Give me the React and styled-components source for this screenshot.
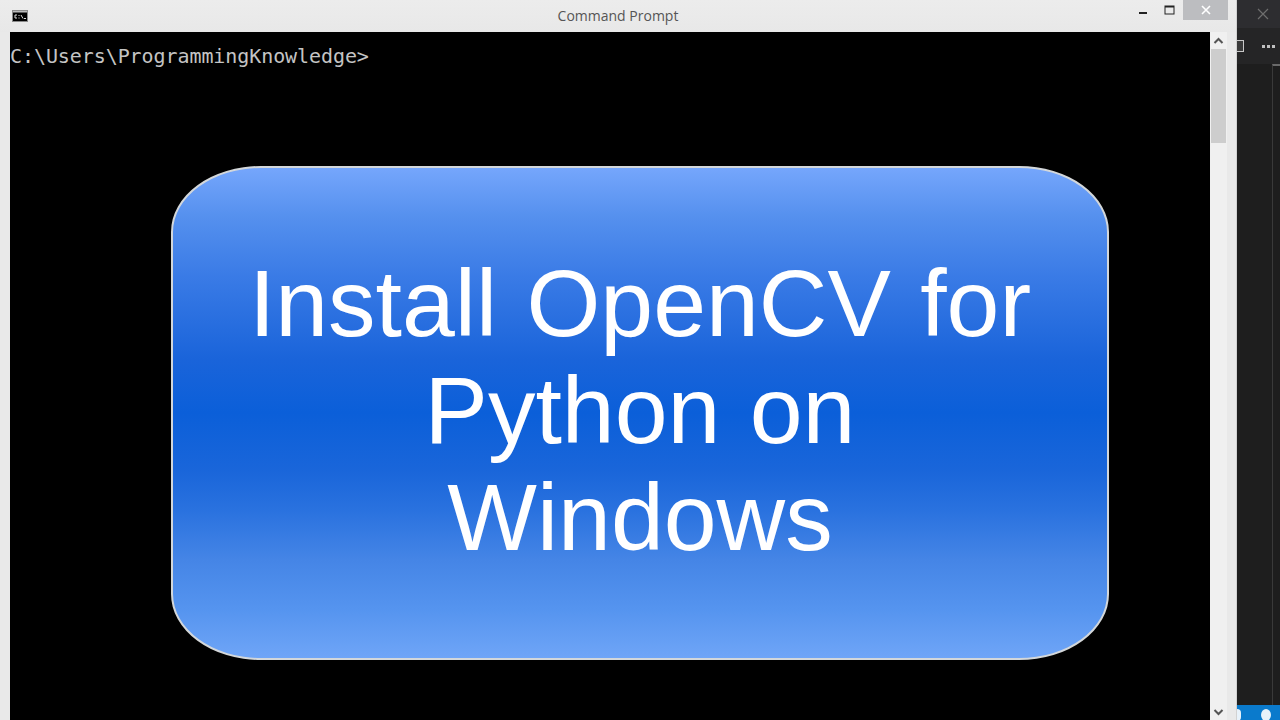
import React from "react";
import styled, { createGlobalStyle } from "styled-components";

const GlobalStyle = createGlobalStyle`
  html, body {
    margin: 0;
    padding: 0;
    width: 1280px;
    height: 720px;
    overflow: hidden;
    background: #1e1e1e;
  }
`;

const Screen = styled.div`
  display: flex;
  width: 1280px;
  height: 720px;
  overflow: hidden;
`;

const Window = styled.div`
  width: 1237px;
  display: flex;
  flex-direction: column;
  background: #e9e9e9;
  border-right: 1px solid #d2d2d2;
  box-sizing: border-box;
`;

const TitleBar = styled.div`
  height: 32px;
  flex: none;
  display: grid;
  grid-template-columns: 1fr auto 1fr;
  align-items: start;
  background: linear-gradient(#ececec, #e8e8e8);
`;

const TitleLeft = styled.div`
  padding: 10px 0 0 12px;
  display: flex;
`;

const Title = styled.div`
  font-family: "Open Sans", "Noto Sans", sans-serif;
  font-size: 14px;
  line-height: 32px;
  color: #555;
`;

const WindowButtons = styled.div`
  display: flex;
  justify-content: flex-end;
  padding-right: 8px;
`;

const WindowButton = styled.div`
  width: ${(p) => p.$w}px;
  height: 20px;
  display: flex;
  align-items: center;
  justify-content: center;
  background: ${(p) => (p.$close ? "#bcbdc0" : "transparent")};
`;

const Body = styled.div`
  flex: 1;
  display: flex;
  min-height: 0;
  padding-left: 10px;
`;

const Console = styled.div`
  width: 1200px;
  background: #000;
  display: flex;
  flex-direction: column;
  overflow: hidden;
`;

const Prompt = styled.div`
  font-family: "DejaVu Sans Mono", "Liberation Mono", monospace;
  font-size: 20px;
  letter-spacing: -0.08px;
  line-height: 24px;
  height: 24px;
  margin-top: 12px;
  color: #c4c4c4;
  white-space: pre;
`;

const Banner = styled.div`
  box-sizing: border-box;
  width: 938px;
  height: 494px;
  margin: 98px 0 0 161px;
  padding-bottom: 5px;
  flex: none;
  border: 2px solid #d3d7da;
  border-radius: 90px / 66px;
  background: linear-gradient(
    #75a6fc 0%,
    #5590ee 10%,
    #3a7be6 22%,
    #1a64da 39%,
    #0b5fd9 50%,
    #1a66da 62%,
    #2a72df 70%,
    #4585e6 80%,
    #5594ef 90%,
    #6fa5f7 100%
  );
  display: flex;
  flex-direction: column;
  align-items: center;
  justify-content: center;
`;

const BannerLine = styled.div`
  font-family: "Liberation Sans", Arial, sans-serif;
  font-size: 95px;
  word-spacing: 3px;
  line-height: 107px;
  color: #fff;
  white-space: pre;
`;

const ScrollBar = styled.div`
  width: 17px;
  flex: none;
  display: flex;
  flex-direction: column;
  align-items: center;
  background: #f0f0f0;
`;

const ScrollArrow = styled.div`
  height: 17px;
  flex: none;
  display: flex;
  align-items: center;
  justify-content: center;
`;

const ScrollThumb = styled.div`
  width: 15px;
  height: 94px;
  flex: none;
  background: #cdcdcd;
`;

const ScrollTrack = styled.div`
  flex: 1;
`;

const SidePanel = styled.div`
  flex: 1;
  display: flex;
  flex-direction: column;
  background: #1e1e1e;
`;

const SideTitle = styled.div`
  height: 28px;
  flex: none;
  background: #2d2d30;
  display: flex;
  justify-content: flex-end;
  align-items: center;
  padding-right: 11px;
`;

const SideTabs = styled.div`
  height: 36px;
  flex: none;
  background: #252526;
  display: flex;
  align-items: center;
  justify-content: space-between;
  padding-right: 5px;
`;

const SideSplit = styled.div`
  width: 7px;
  height: 12px;
  box-sizing: border-box;
  background: #3a3a3a;
  border: 1px solid #c8c8c8;
  border-left: none;
`;

const Dots = styled.div`
  display: flex;
  gap: 2px;
`;

const Dot = styled.span`
  width: 3px;
  height: 3px;
  background: #c0c0c0;
`;

const SideEditor = styled.div`
  flex: 1;
  display: flex;
  justify-content: flex-end;
`;

const MiniScroll = styled.div`
  width: 7px;
  border-left: 1px solid #3a3a3a;
  border-top: 2px solid #6a6a6a;
`;

const StatusBar = styled.div`
  height: 11px;
  flex: none;
  background: #0a7acc;
  display: flex;
  align-items: flex-start;
  overflow: hidden;
  padding-top: 4px;
  gap: 20px;
`;

const StatusIcon = styled.span`
  width: ${(p) => p.$w}px;
  height: 12px;
  flex: none;
  background: #e8f2fa;
  border-radius: ${(p) => (p.$half ? "0 6px 6px 0" : "50%")};
`;

function App() {
  return (
    <Screen>
      <GlobalStyle />
      <Window>
        <TitleBar>
          <TitleLeft>
            <svg width="16" height="12" viewBox="0 0 16 12">
              <rect x="0.5" y="0.5" width="15" height="11" fill="#000" stroke="#8a8a8a" />
              <rect x="1" y="1" width="14" height="1.5" fill="#bbb" />
              <path d="M5 5H3v3h2M7 5v1M7 7.5v1M9 5l2 3.5M12 8.5h2" stroke="#ddd" strokeWidth="1" fill="none" />
            </svg>
          </TitleLeft>
          <Title>Command Prompt</Title>
          <WindowButtons>
            <WindowButton $w={27}>
              <svg width="10" height="10" viewBox="0 0 10 10">
                <rect x="1" y="7" width="8" height="2" fill="#222" />
              </svg>
            </WindowButton>
            <WindowButton $w={27}>
              <svg width="11" height="10" viewBox="0 0 11 10">
                <rect x="1" y="1" width="9" height="8" fill="none" stroke="#222" strokeWidth="1" />
                <rect x="1" y="1" width="9" height="1.5" fill="#222" />
              </svg>
            </WindowButton>
            <WindowButton $w={45} $close>
              <svg width="10" height="10" viewBox="0 0 10 10">
                <path d="M1 1l8 8M9 1l-8 8" stroke="#fff" strokeWidth="1.6" />
              </svg>
            </WindowButton>
          </WindowButtons>
        </TitleBar>
        <Body>
          <Console>
            <Prompt>{"C:\\Users\\ProgrammingKnowledge>"}</Prompt>
            <Banner>
              <BannerLine>Install OpenCV for</BannerLine>
              <BannerLine>Python on</BannerLine>
              <BannerLine>Windows</BannerLine>
            </Banner>
          </Console>
          <ScrollBar>
            <ScrollArrow>
              <svg width="11" height="8" viewBox="0 0 11 8">
                <path d="M1.5 6l4-4 4 4" fill="none" stroke="#555" strokeWidth="2" />
              </svg>
            </ScrollArrow>
            <ScrollThumb />
            <ScrollTrack />
            <ScrollArrow>
              <svg width="11" height="8" viewBox="0 0 11 8">
                <path d="M1.5 2l4 4 4-4" fill="none" stroke="#555" strokeWidth="2" />
              </svg>
            </ScrollArrow>
          </ScrollBar>
        </Body>
      </Window>
      <SidePanel>
        <SideTitle>
          <svg width="12" height="12" viewBox="0 0 12 12">
            <path d="M1 1l10 10M11 1L1 11" stroke="#6e6e6e" strokeWidth="1.2" />
          </svg>
        </SideTitle>
        <SideTabs>
          <SideSplit />
          <Dots>
            <Dot />
            <Dot />
            <Dot />
          </Dots>
        </SideTabs>
        <SideEditor>
          <MiniScroll />
        </SideEditor>
        <StatusBar>
          <StatusIcon $w={4} $half />
          <StatusIcon $w={10} />
        </StatusBar>
      </SidePanel>
    </Screen>
  );
}

export default App;
